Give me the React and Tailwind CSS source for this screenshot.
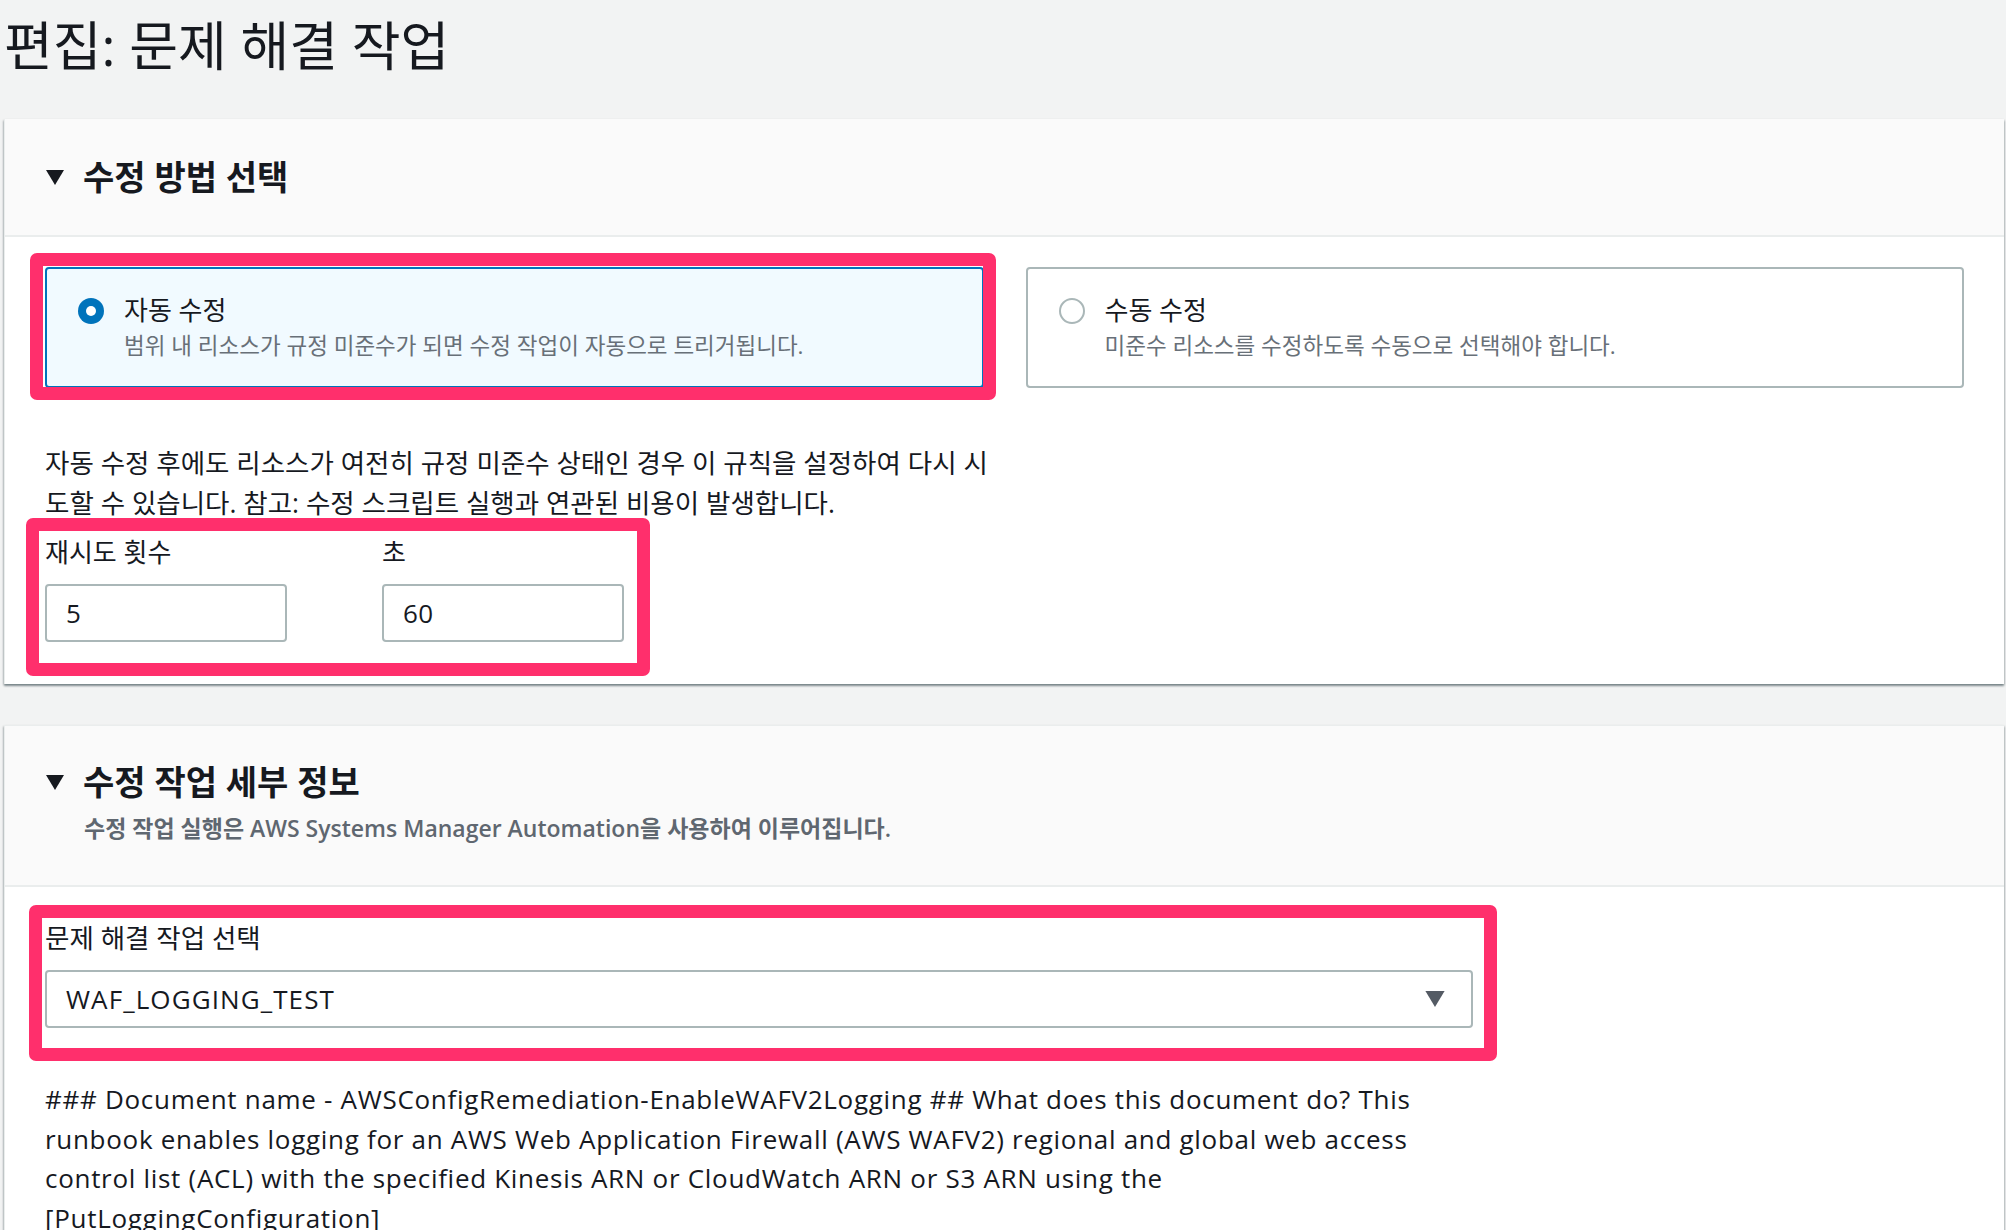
import { useState } from 'react'

const FONT = "font-['Open_Sans','Noto_Sans_CJK_KR',sans-serif]"

const Highlight = ({ className }) => (
  <div
    className={`pointer-events-none absolute rounded-[7px] border-[13px] border-[#ff2f6c] ${className}`}
  />
)

const Caret = ({ className = '' }) => (
  <svg viewBox="0 0 18 15" className={className} aria-hidden="true">
    <path d="M0 0 H18 L9 15 Z" fill="currentColor" />
  </svg>
)

const Radio = ({ checked }) =>
  checked ? (
    <span className="mt-[5px] flex h-[26px] w-[26px] shrink-0 items-center justify-center rounded-full bg-[#0073bb]">
      <span className="h-[10px] w-[10px] rounded-full bg-white" />
    </span>
  ) : (
    <span className="mt-[5px] h-[26px] w-[26px] shrink-0 rounded-full border-2 border-[#aab7b8] bg-white" />
  )

const RadioCard = ({ checked, label, description, onSelect }) => (
  <button
    type="button"
    onClick={onSelect}
    className={`flex h-[121px] items-start gap-[20px] rounded-[4px] border-2 pl-[31px] pt-[24px] text-left ${
      checked ? 'border-[#0073bb] bg-[#f1faff]' : 'border-[#aab7b8] bg-white'
    }`}
  >
    <Radio checked={checked} />
    <div>
      <p className="text-[26px] leading-[34px] text-[#16191f]">{label}</p>
      <p className="mt-[2px] text-[22.5px] leading-[34px] text-[#687078]">{description}</p>
    </div>
  </button>
)

const Panel = ({ children }) => (
  <section className="ml-[4px] mr-[2px] border-l border-[#eaeded] bg-white shadow-[0_2px_2px_rgba(0,28,36,0.4),1px_1px_2px_rgba(0,28,36,0.12),-1px_1px_2px_rgba(0,28,36,0.12)]">
    {children}
  </section>
)

const NumberField = ({ label, value }) => (
  <div className="w-[242px]">
    <p className="text-[26px] leading-[34px] text-[#16191f]">{label}</p>
    <input
      defaultValue={value}
      className="mt-[15px] h-[58px] w-full rounded-[4px] border-2 border-[#aab7b8] bg-white pl-[19px] text-[26px] tracking-[0.5px] text-[#16191f] outline-none"
    />
  </div>
)

export default function App() {
  const [mode, setMode] = useState('auto')

  return (
    <div className={`min-h-screen w-full bg-[#f2f3f3] pb-10 ${FONT}`}>
      {/* Page title */}
      <div className="flex h-[119px] items-start pl-[4px] pt-[16px]">
        <h1 className="text-[53px] font-normal leading-[60px] text-[#16191f]">편집: 문제 해결 작업</h1>
      </div>

      {/* Remediation method */}
      <Panel>
        <header className="flex h-[118px] items-center gap-[19px] border-b-2 border-[#eaeded] bg-[#fafafa] pl-[41px]">
          <Caret className="h-[15px] w-[18px] text-[#16191f]" />
          <h2 className="text-[34px] font-bold leading-[40px] text-[#16191f]">수정 방법 선택</h2>
        </header>

        <div className="px-[40px] pb-[42px] pt-[30px]">
          <div className="grid grid-cols-2 gap-[42px]">
            <div className="relative grid">
              <RadioCard
                checked={mode === 'auto'}
                label="자동 수정"
                description="범위 내 리소스가 규정 미준수가 되면 수정 작업이 자동으로 트리거됩니다."
                onSelect={() => setMode('auto')}
              />
              <Highlight className="-left-[15px] -top-[14px] h-[147px] w-[966px]" />
            </div>
            <RadioCard
              checked={mode === 'manual'}
              label="수동 수정"
              description="미준수 리소스를 수정하도록 수동으로 선택해야 합니다."
              onSelect={() => setMode('manual')}
            />
          </div>

          <p className="mt-[55px] whitespace-nowrap text-[26.5px] leading-[40px] text-[#16191f]">
            자동 수정 후에도 리소스가 여전히 규정 미준수 상태인 경우 이 규칙을 설정하여 다시 시
            <br />
            도할 수 있습니다. 참고: 수정 스크립트 실행과 연관된 비용이 발생합니다.
          </p>

          <div className="relative mt-[12px] flex w-[580px] gap-[95px]">
            <NumberField label="재시도 횟수" value="5" />
            <NumberField label="초" value="60" />
            <Highlight className="-left-[19px] -top-[17px] h-[158px] w-[624px]" />
          </div>
        </div>
      </Panel>

      {/* Remediation action details */}
      <div className="mt-[41px]">
        <Panel>
          <header className="h-[162px] border-b-2 border-t border-[#eaeded] bg-[#fafafa] pl-[41px] pt-[36px]">
            <div className="flex items-center gap-[19px]">
              <Caret className="h-[15px] w-[18px] text-[#16191f]" />
              <h2 className="text-[34px] font-bold leading-[40px] text-[#16191f]">수정 작업 세부 정보</h2>
            </div>
            <p className="ml-[38px] mt-[11px] text-[23px] font-semibold leading-[30px] text-[#5f6770]">
              수정 작업 실행은 AWS Systems Manager Automation을 사용하여 이루어집니다.
            </p>
          </header>

          <div className="px-[40px] pb-[40px] pt-[34px]">
            <div className="relative w-[1428px]">
              <p className="text-[26.5px] leading-[34px] text-[#16191f]">문제 해결 작업 선택</p>
              <div className="mt-[15px] flex h-[58px] items-center justify-between rounded-[4px] border-2 border-[#aab7b8] bg-white pl-[19px] pr-[25px]">
                <span className="text-[26px] tracking-[1.1px] text-[#16191f]">WAF_LOGGING_TEST</span>
                <Caret className="h-[16px] w-[22px] text-[#545b64]" />
              </div>
              <Highlight className="-left-[16px] -top-[16px] h-[156px] w-[1468px]" />
            </div>

            <p className="mt-[52px] whitespace-nowrap text-[26px] leading-[39.5px] tracking-[0.7px] text-[#16191f]">
              ### Document name - AWSConfigRemediation-EnableWAFV2Logging ## What does this document do? This
              <br />
              runbook enables logging for an AWS Web Application Firewall (AWS WAFV2) regional and global web access
              <br />
              control list (ACL) with the specified Kinesis ARN or CloudWatch ARN or S3 ARN using the
              <br />
              [PutLoggingConfiguration]
            </p>
          </div>
        </Panel>
      </div>
    </div>
  )
}
